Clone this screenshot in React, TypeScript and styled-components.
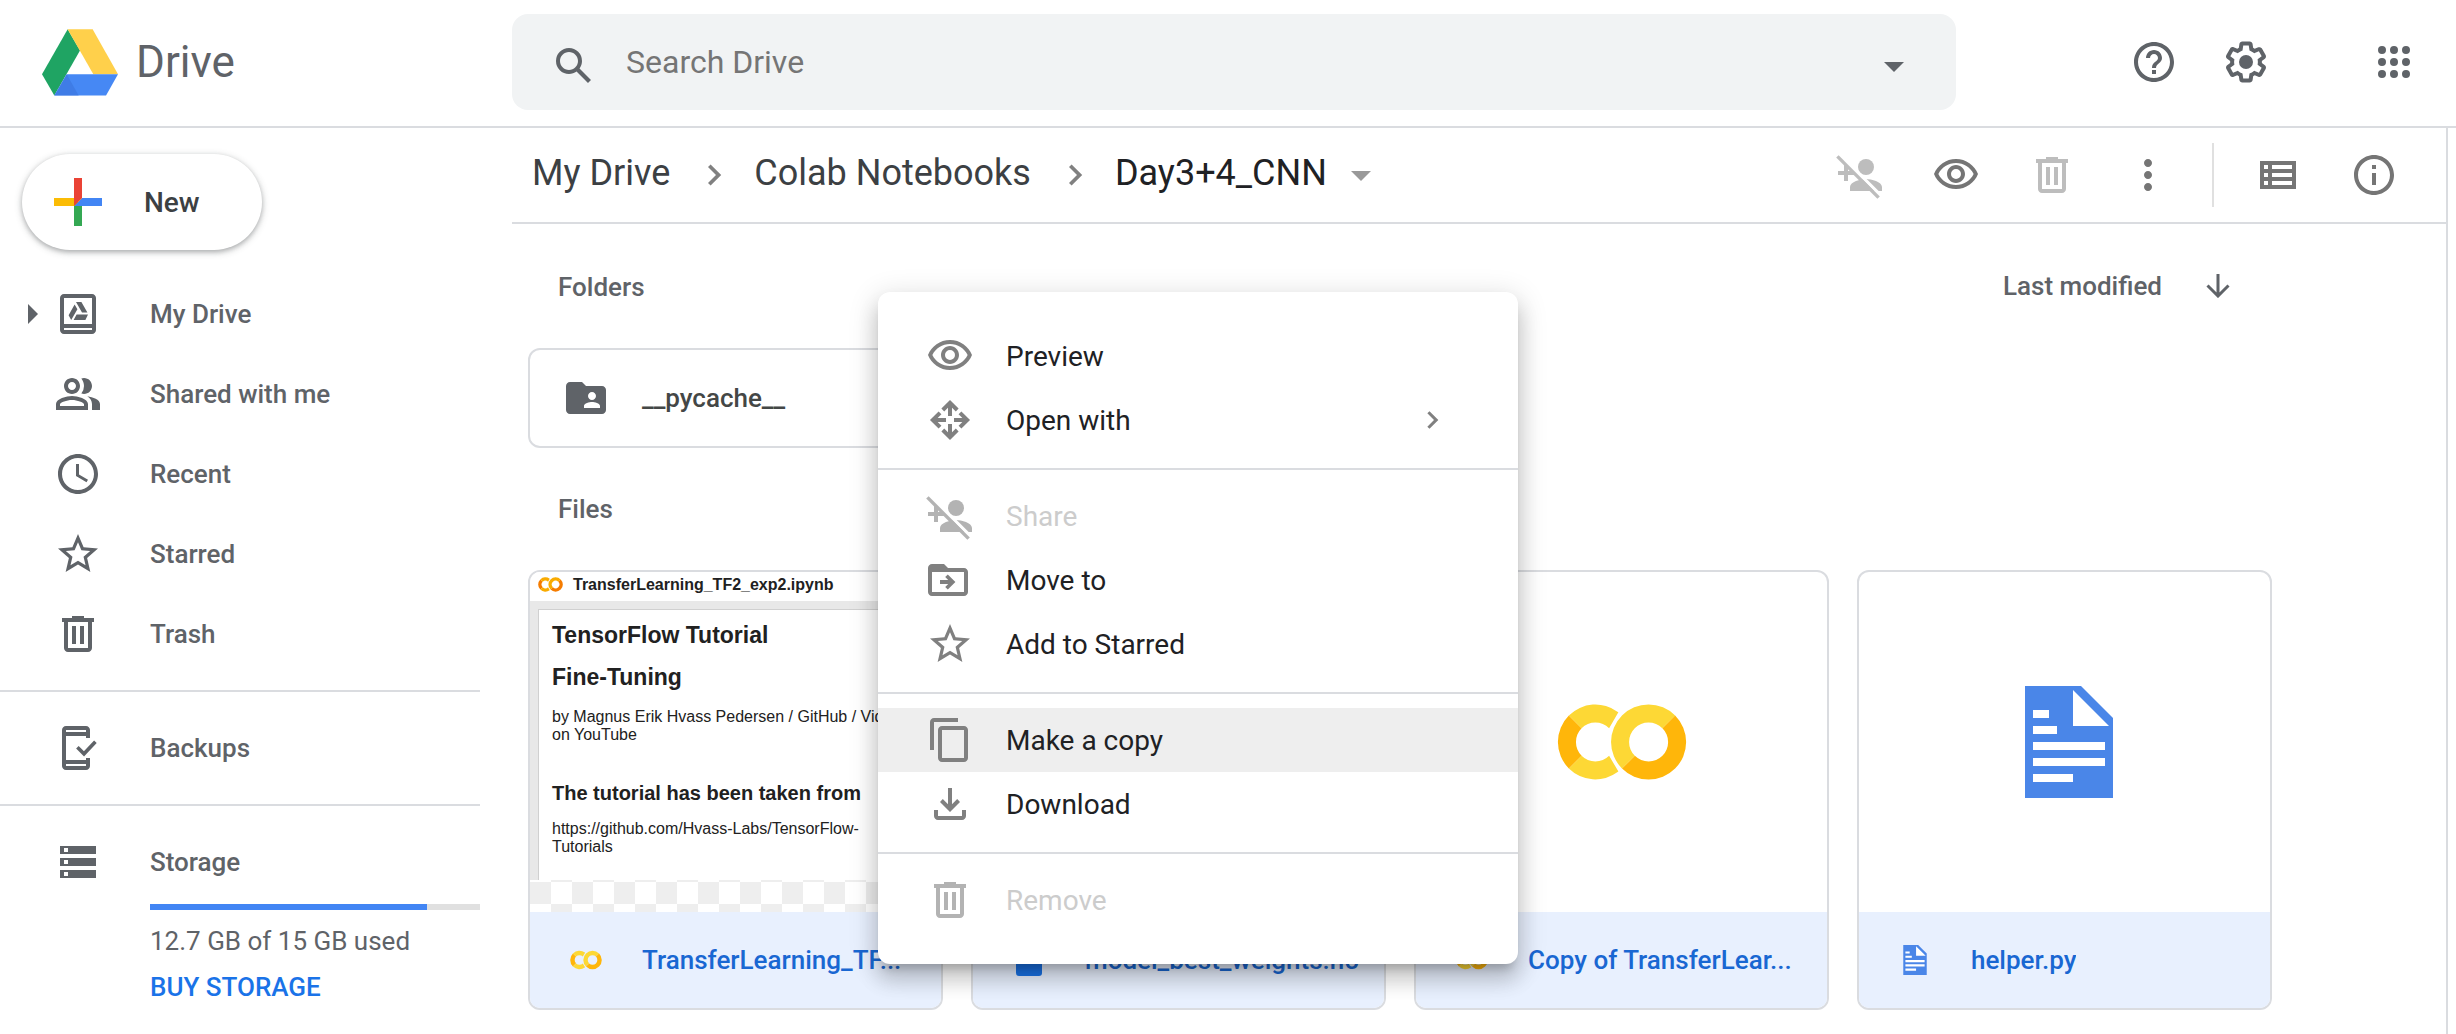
import React from "react";
import styled, { createGlobalStyle } from "styled-components";

const ink = "#5f6368";
const line = "#dadce0";
const sans = `Roboto, "Liberation Sans", sans-serif`;

const GlobalStyle = createGlobalStyle`
  *, *::before, *::after { box-sizing: border-box; }
  html, body { margin: 0; background: #fff; }
  body { font-family: ${sans}; font-size: 26px; color: ${ink}; overflow: hidden; }
  button, input { font: inherit; color: inherit; border: 0; background: none; padding: 0; margin: 0; outline: none; }
  a { color: inherit; text-decoration: none; }
  ul, ol { list-style: none; margin: 0; padding: 0; }
  h1, h2, h3, p { margin: 0; font: inherit; }
`;

/* ---------- icons ---------- */

const Svg = styled.svg<{ $size?: number }>`
  display: block;
  flex: none;
  width: ${(p) => p.$size ?? 48}px;
  height: ${(p) => p.$size ?? 48}px;
  fill: currentColor;
`;

const paths = {
  search:
    "M20.49 19l-5.73-5.73C15.53 12.2 16 10.91 16 9.5A6.5 6.5 0 1 0 9.5 16c1.41 0 2.7-.47 3.77-1.24L19 20.49 20.49 19zM5 9.5C5 7.01 7.01 5 9.5 5S14 7.01 14 9.5 11.99 14 9.5 14 5 11.99 5 9.5z",
  dropdown: "M7 10l5 5 5-5z",
  help: "M11 18h2v-2h-2v2zm1-16C6.48 2 2 6.48 2 12s4.48 10 10 10 10-4.48 10-10S17.52 2 12 2zm0 18c-4.41 0-8-3.59-8-8s3.59-8 8-8 8 3.59 8 8-3.59 8-8 8zm0-14c-2.21 0-4 1.79-4 4h2c0-1.1.9-2 2-2s2 .9 2 2c0 2-3 1.75-3 5h2c0-2.25 3-2.5 3-5 0-2.21-1.79-4-4-4z",
  gear: "M13.85 22.25h-3.7c-.74 0-1.36-.54-1.45-1.27l-.27-1.89c-.27-.14-.53-.29-.79-.46l-1.8.72c-.7.26-1.47-.03-1.81-.65L2.2 15.53c-.35-.66-.2-1.44.36-1.88l1.53-1.19c-.01-.15-.02-.3-.02-.46 0-.15.01-.31.02-.46l-1.52-1.19c-.59-.45-.74-1.26-.37-1.88l1.85-3.19c.34-.62 1.11-.9 1.79-.63l1.81.73c.26-.17.52-.32.78-.46l.27-1.91c.09-.7.71-1.25 1.44-1.25h3.7c.74 0 1.36.54 1.45 1.27l.27 1.89c.27.14.53.29.79.46l1.8-.72c.71-.26 1.48.03 1.82.65l1.84 3.18c.36.66.2 1.44-.36 1.88l-1.52 1.19c.01.15.02.3.02.46s-.01.31-.02.46l1.52 1.19c.56.45.72 1.23.37 1.86l-1.86 3.22c-.34.62-1.11.9-1.8.63l-1.8-.72c-.26.17-.52.32-.78.46l-.27 1.91c-.1.68-.72 1.22-1.46 1.22zm-3.23-2h2.76l.37-2.55.53-.22c.44-.18.88-.44 1.34-.78l.45-.34 2.38.96 1.38-2.4-2.03-1.58.07-.56c.03-.26.06-.51.06-.78s-.03-.53-.06-.78l-.07-.56 2.03-1.58-1.39-2.4-2.39.96-.45-.35c-.42-.32-.87-.58-1.33-.77l-.52-.22-.37-2.55h-2.76l-.37 2.55-.53.21c-.44.19-.88.44-1.34.79l-.45.33-2.38-.95-1.39 2.39 2.03 1.58-.07.56a7 7 0 0 0-.06.79c0 .26.02.53.06.78l.07.56-2.03 1.58 1.38 2.4 2.39-.96.45.35c.43.33.86.58 1.33.77l.53.22.38 2.55zM12 8.5a3.5 3.5 0 1 1 0 7 3.5 3.5 0 0 1 0-7z",
  apps: "M6 4a2 2 0 1 1 0 4 2 2 0 0 1 0-4zM12 4a2 2 0 1 1 0 4 2 2 0 0 1 0-4zM18 4a2 2 0 1 1 0 4 2 2 0 0 1 0-4zM6 10a2 2 0 1 1 0 4 2 2 0 0 1 0-4zM12 10a2 2 0 1 1 0 4 2 2 0 0 1 0-4zM18 10a2 2 0 1 1 0 4 2 2 0 0 1 0-4zM6 16a2 2 0 1 1 0 4 2 2 0 0 1 0-4zM12 16a2 2 0 1 1 0 4 2 2 0 0 1 0-4zM18 16a2 2 0 1 1 0 4 2 2 0 0 1 0-4z",
  drive:
    "M19 2H5c-1.1 0-2 .9-2 2v16c0 1.1.9 2 2 2h14c1.1 0 2-.9 2-2V4c0-1.1-.9-2-2-2zM5 4h14v13H5V4zm0 15h14v1H5v-1zM10.3 7.3l1.4 2.3L8.6 15l-1.3-2.4zM11 6h2.7l3 5.2H14zM11.3 12.2H17L15.7 15H9.8z",
  shared:
    "M15 8c0-1.42-.5-2.73-1.33-3.76.42-.14.86-.24 1.33-.24 2.21 0 4 1.79 4 4s-1.79 4-4 4c-.43 0-.84-.09-1.23-.21-.03-.01-.06-.02-.1-.03A5.98 5.98 0 0 0 15 8zm1.66 5.13C18.03 14.06 19 15.32 19 17v3h4v-3c0-2.18-3.58-3.47-6.34-3.87zM9 6c-1.1 0-2 .9-2 2s.9 2 2 2 2-.9 2-2-.9-2-2-2zm0-2c2.21 0 4 1.79 4 4s-1.79 4-4 4-4-1.79-4-4 1.79-4 4-4zm0 9c-2.67 0-8 1.34-8 4v3h16v-3c0-2.66-5.33-4-8-4zm6 5H3v-.99C3.2 16.29 6.3 15 9 15s5.8 1.29 6 2v1z",
  recent:
    "M12 2C6.5 2 2 6.5 2 12s4.5 10 10 10 10-4.5 10-10S17.5 2 12 2zm0 18c-4.41 0-8-3.59-8-8s3.59-8 8-8 8 3.59 8 8-3.59 8-8 8zm.5-13H11v6l5.25 3.15.75-1.23-4.5-2.67V7z",
  star: "M22 9.24l-7.19-.62L12 2 9.19 8.63 2 9.24l5.46 4.73L5.82 21 12 17.27 18.18 21l-1.63-7.03L22 9.24zM12 15.4l-3.76 2.27 1-4.28-3.32-2.88 4.38-.38L12 6.1l1.71 4.04 4.38.38-3.32 2.88 1 4.28L12 15.4z",
  trash:
    "M15 4V3H9v1H4v2h1v13c0 1.1.9 2 2 2h10c1.1 0 2-.9 2-2V6h1V4h-5zm2 15H7V6h10v13zM9 8h2v9H9V8zm4 0h2v9h-2V8z",
  storage:
    "M3 20h18v-4H3v4zm2-3h2v2H5v-2zM3 4v4h18V4H3zm4 3H5V5h2v2zm-4 7h18v-4H3v4zm2-3h2v2H5v-2z",
  eye: "M12 6c3.79 0 7.17 2.13 8.82 5.5C19.17 14.87 15.79 17 12 17s-7.17-2.13-8.82-5.5C4.83 8.13 8.21 6 12 6m0-2C7 4 2.73 7.11 1 11.5 2.73 15.89 7 19 12 19s9.27-3.11 11-7.5C21.27 7.11 17 4 12 4zm0 5a2.5 2.5 0 0 1 0 5 2.5 2.5 0 0 1 0-5m0-2c-2.48 0-4.5 2.02-4.5 4.5S9.52 16 12 16s4.5-2.02 4.5-4.5S14.48 7 12 7z",
  more: "M12 8c1.1 0 2-.9 2-2s-.9-2-2-2-2 .9-2 2 .9 2 2 2zm0 2c-1.1 0-2 .9-2 2s.9 2 2 2 2-.9 2-2-.9-2-2-2zm0 6c-1.1 0-2 .9-2 2s.9 2 2 2 2-.9 2-2-.9-2-2-2z",
  list: "M3 5v14h18V5H3zM5 7h2v2H5V7zm4 0h10v2H9V7zm-4 4h2v2H5v-2zm4 0h10v2H9v-2zm-4 4h2v2H5v-2zm4 0h10v2H9v-2z",
  info: "M11 7h2v2h-2V7zm0 4h2v6h-2v-6zm1-9C6.48 2 2 6.48 2 12s4.48 10 10 10 10-4.48 10-10S17.52 2 12 2zm0 18c-4.41 0-8-3.59-8-8s3.59-8 8-8 8 3.59 8 8-3.59 8-8 8z",
  folderShared:
    "M20 6h-8l-2-2H4c-1.1 0-1.99.9-1.99 2L2 18c0 1.1.9 2 2 2h16c1.1 0 2-.9 2-2V8c0-1.1-.9-2-2-2zm-5 3c1.1 0 2 .9 2 2s-.9 2-2 2-2-.9-2-2 .9-2 2-2zm4 8h-8v-1c0-1.33 2.67-2 4-2s4 .67 4 2v1z",
  move: "M19 6h-8l-2-2H3c-1.1 0-2 .9-2 2v12c0 1.1.9 2 2 2h16c1.1 0 2-.9 2-2V8c0-1.1-.9-2-2-2zM19 18H3V8h16v10zM10.9 9.2 9.6 10.5 11.1 12H7v2h4.1l-1.5 1.5 1.3 1.3L14.7 13z",
  copy: "M16 1H4c-1.1 0-2 .9-2 2v14h2V3h12V1zm3 4H8c-1.1 0-2 .9-2 2v14c0 1.1.9 2 2 2h11c1.1 0 2-.9 2-2V7c0-1.1-.9-2-2-2zm0 16H8V7h11v14z",
  download:
    "M12 16l-5-5 1.4-1.45 2.6 2.6V4h2v8.15l2.6-2.6L17 11l-5 5zM6 20c-1.1 0-2-.9-2-2v-3h2v3h12v-3h2v3c0 1.1-.9 2-2 2H6z",
  chevron: "M9.3 6.7 8 8l4 4-4 4 1.3 1.3L14.6 12z",
};

type IconName = keyof typeof paths | "shareOff" | "backups" | "openWith";

function Icon({ name, size }: { name: IconName; size?: number }) {
  if (name === "shareOff")
    return (
      <Svg $size={size} viewBox="0 0 24 24" aria-hidden="true">
        <circle cx="15" cy="8" r="4" />
        <path d="M15 14c-2.67 0-8 1.34-8 4v2h16v-2c0-2.66-5.33-4-8-4zM6 10V7H4v3H1v2h3v3h2v-3h3v-2z" />
        <path d="M8.5 8.3 22 21.8" stroke="#fff" strokeWidth="1.6" />
        <path d="M.7 2.7 21.3 23.3" stroke="currentColor" strokeWidth="1.7" />
      </Svg>
    );
  if (name === "backups")
    return (
      <Svg $size={size} viewBox="0 0 24 24" aria-hidden="true">
        <path d="M6 1h10c1.1 0 2 .9 2 2v4h-2V6H6v12h10v-1h2v4c0 1.1-.9 2-2 2H6c-1.1 0-2-.9-2-2V3c0-1.1.9-2 2-2zm0 2v1h10V3H6zm0 17v1h10v-1H6z" fillRule="evenodd" />
        <path d="M11.7 11.6 15 14.9l5.7-6" fill="none" stroke="currentColor" strokeWidth="1.8" />
      </Svg>
    );
  if (name === "openWith")
    return (
      <Svg $size={size} viewBox="0 0 24 24" aria-hidden="true">
        {[0, 90, 180, 270].map((a) => (
          <path
            key={a}
            d="M12 10V4M8.4 7 12 3.4 15.6 7"
            fill="none"
            stroke="currentColor"
            strokeWidth="2"
            transform={`rotate(${a} 12 12)`}
          />
        ))}
      </Svg>
    );
  return (
    <Svg $size={size} viewBox="0 0 24 24" aria-hidden="true">
      <path d={paths[name]} fillRule="evenodd" />
    </Svg>
  );
}

function Colab({ size, light = "#fdd835", dark = "#ffb60a" }: { size: number; light?: string; dark?: string }) {
  return (
    <Svg $size={size} viewBox="0 0 24 24" aria-hidden="true">
      <path fill={dark} d="M4.54 9.46 2.19 7.1a6.93 6.93 0 0 0 0 9.79l2.36-2.36a3.59 3.59 0 0 1-.01-5.07z" />
      <path fill={light} d="M2.19 7.1l2.35 2.36a3.59 3.59 0 0 1 5.08 0l1.71-2.93-.1-.08A6.93 6.93 0 0 0 2.19 7.1zM11.34 17.46l-1.72-2.92a3.59 3.59 0 0 1-5.08 0L2.19 16.9a6.93 6.93 0 0 0 9 .65l.11-.09zM12 7.1a6.93 6.93 0 0 0 0 9.79l2.36-2.36a3.59 3.59 0 1 1 5.08-5.08L21.81 7.1A6.93 6.93 0 0 0 12 7.1z" />
      <path fill={dark} d="M21.81 7.1l-2.35 2.36a3.59 3.59 0 0 1-5.08 5.08L12 16.9a6.93 6.93 0 0 0 9.81-9.8z" />
    </Svg>
  );
}

function DocIcon({ size, viewBox = "-12 0 112 112" }: { size: number; viewBox?: string }) {
  return (
    <Svg $size={size} viewBox={viewBox} aria-hidden="true">
      <path fill="#4a86e8" d="M4 0h56l32 32v80H4z" />
      <path fill="#fff" d="M52 4v36h36zM12 24h16v8H12zM12 40h24v8H12zM12 56h72v8H12zM12 72h72v8H12zM12 88h40v8H12z" />
    </Svg>
  );
}

function BlankFileIcon() {
  return (
    <Svg $size={32} viewBox="0 0 32 32" aria-hidden="true">
      <path fill="#1a73e8" d="M6 0h14l9 9v20a3 3 0 0 1-3 3H6a3 3 0 0 1-3-3V3a3 3 0 0 1 3-3z" />
    </Svg>
  );
}

const LogoSvg = styled.svg`
  display: block;
  width: 76px;
  height: 67px;
`;

function DriveLogo() {
  return (
    <LogoSvg viewBox="36 56 228 200" aria-hidden="true">
      <path fill="#1fa463" d="M113 56l37 64-77 135-37-64z" />
      <path fill="#ffd04b" d="M113 56h75l76 135h-74z" />
      <path fill="#4688f4" d="M110 191h154l-36 64H73z" />
      <path fill="#3c78e0" d="M110 191l36 64H73z" opacity=".7" />
    </LogoSvg>
  );
}

/* ---------- header ---------- */

const Header = styled.header`
  display: flex;
  align-items: center;
  height: 128px;
  padding-right: 22px;
  padding-bottom: 2px;
  border-bottom: 2px solid ${line};
`;

const Brand = styled.a`
  display: flex;
  align-items: center;
  flex: none;
  gap: 18px;
  width: 512px;
  padding-left: 42px;
  font-size: 44px;
  line-height: 52px;
`;

const SearchBar = styled.form`
  display: flex;
  flex: 1;
  max-width: 1444px;
  height: 96px;
  border-radius: 16px;
  background: #f1f3f4;
`;

const SearchButton = styled.button`
  display: flex;
  align-items: center;
  width: 114px;
  padding: 8px 28px 0 38px;
`;

const SearchInput = styled.input`
  flex: 1;
  min-width: 0;
  height: 96px;
  padding-right: 8px;
  font-size: 32px;
  &::placeholder { color: #757575; opacity: 1; }
`;

const SearchOptions = styled(SearchButton)`
  width: 124px;
`;

const HeaderActions = styled.div`
  display: flex;
  gap: 12px;
  margin-left: auto;
`;

const RoundButton = styled.button<{ $apart?: boolean }>`
  display: flex;
  align-items: center;
  justify-content: center;
  width: 80px;
  height: 80px;
  margin-left: ${(p) => (p.$apart ? 56 : 0)}px;
`;

/* ---------- sidebar ---------- */

const Body = styled.div`
  display: flex;
  align-items: stretch;
  min-height: calc(100vh - 128px);
`;

const Sidebar = styled.nav`
  flex: none;
  width: 480px;
  margin-right: 32px;
  padding-top: 26px;
`;

const NewButton = styled.button`
  display: flex;
  align-items: center;
  gap: 30px;
  width: 240px;
  height: 96px;
  margin: 0 0 24px 22px;
  padding-left: 20px;
  border-radius: 48px;
  background: #fff;
  color: #3c4043;
  font-size: 28px;
  font-weight: 500;
  box-shadow: 0 2px 4px rgba(60, 64, 67, 0.3), 0 2px 6px 2px rgba(60, 64, 67, 0.15);
`;

const NavGroup = styled.ul`
  padding-bottom: 16px;
  margin-bottom: 16px;
  border-bottom: 2px solid ${line};
`;

const NavLink = styled.a`
  display: flex;
  align-items: center;
  height: 80px;
  padding-left: 26px;
  font-weight: 500;
`;

const Expander = styled.span`
  width: 28px;
  padding-left: 2px;
`;

const NavText = styled.span`
  margin-left: 48px;
`;

const StorageDetails = styled.div`
  margin: 2px 0 0 150px;
`;

const Meter = styled.div`
  height: 6px;
  background: #e0e0e0;
`;

const MeterFill = styled.div`
  height: 6px;
  background: #4285f4;
`;

const Usage = styled.p`
  margin-top: 8px;
  line-height: 46px;
`;

const BuyLink = styled.a`
  display: block;
  color: #1a73e8;
  font-weight: 500;
  line-height: 46px;
`;

/* ---------- main ---------- */

const Main = styled.main`
  flex: 1;
  min-width: 0;
`;

const Rail = styled.aside`
  flex: none;
  width: 10px;
  border-left: 2px solid ${line};
`;

const Toolbar = styled.div`
  display: flex;
  align-items: center;
  justify-content: space-between;
  height: 96px;
  padding: 0 24px 0 20px;
  border-bottom: 2px solid ${line};
`;

const Crumbs = styled.ol`
  display: flex;
  align-items: center;
  color: #808080;
`;

const Crumb = styled.li`
  display: flex;
  align-items: center;
`;

const CrumbLink = styled.a<{ $current?: boolean }>`
  padding-bottom: 4px;
  font-size: 36px;
  line-height: 44px;
  color: ${(p) => (p.$current ? "#202124" : "#3c4043")};
`;

const CrumbGap = styled.span`
  display: flex;
  padding: 0 14px 0 22px;
`;

const CrumbMenu = styled.button`
  margin-left: 10px;
  color: #999;
`;

const Tools = styled.div`
  display: flex;
  align-items: center;
`;

const ToolButton = styled.button`
  display: flex;
  justify-content: center;
  align-items: center;
  width: 96px;
  height: 96px;
  color: #757575;
  &:disabled { color: #bdbdbd; }
`;

const ToolDivider = styled.span`
  width: 2px;
  height: 64px;
  margin: 0 16px;
  background: #e0e0e0;
`;

const Content = styled.div`
  padding: 2px 174px 24px 16px;
`;

const SectionHead = styled.div`
  display: flex;
  align-items: center;
  justify-content: space-between;
  height: 122px;
  padding: 0 42px 0 30px;
`;

const SectionTitle = styled.h2`
  font-weight: 500;
`;

const SortButton = styled.button`
  display: flex;
  align-items: center;
  gap: 44px;
  padding-bottom: 2px;
  font-weight: 500;
`;

const CardGrid = styled.div`
  display: grid;
  grid-template-columns: repeat(4, minmax(0, 1fr));
  column-gap: 28px;
`;

const FolderCard = styled.a`
  display: flex;
  align-items: center;
  gap: 32px;
  height: 100px;
  padding: 0 20px 0 32px;
  border: 2px solid ${line};
  border-radius: 12px;
  font-weight: 500;
  color: #444746;
  svg { color: ${ink}; }
`;

const FileCard = styled.a`
  display: block;
  overflow: hidden;
  border: 2px solid ${line};
  border-radius: 12px;
`;

const Thumb = styled.div`
  display: flex;
  align-items: center;
  justify-content: center;
  height: 340px;
`;

const FileFooter = styled.div`
  display: flex;
  align-items: center;
  gap: 40px;
  height: 96px;
  padding: 0 16px 0 40px;
  background: #e8f0fe;
`;

const FileName = styled.span`
  min-width: 0;
  overflow: hidden;
  white-space: nowrap;
  text-overflow: ellipsis;
  color: #1967d2;
  font-weight: 500;
  line-height: 36px;
`;

const Notebook = styled.div`
  height: 340px;
  overflow: hidden;
  padding-bottom: 32px;
  background: repeating-conic-gradient(#eee 0 25%, #fff 0 50%) 0 -20px / 42px 44px;
  font-family: "Liberation Sans", Arial, sans-serif;
  font-size: 16px;
  color: #212121;
`;

const NotebookBar = styled.div`
  display: flex;
  align-items: center;
  gap: 10px;
  height: 29px;
  padding: 0 8px 4px;
  background: #fff;
  font-weight: 700;
`;

const NotebookPage = styled.div`
  height: 279px;
  padding: 8px 0 0 8px;
  background: #e8e8e8;
`;

const NotebookCell = styled.div`
  height: 271px;
  padding: 4px 4px 0 13px;
  border: solid #d0d0d0;
  border-width: 1px 0 0 1px;
  background: #fff;
`;

const CellTitle = styled.h3`
  font-size: 23px;
  font-weight: 700;
  line-height: 42px;
`;

const CellSubtitle = styled.h3`
  margin-top: 32px;
  font-size: 20px;
  font-weight: 700;
  line-height: 34px;
`;

const CellText = styled.p`
  margin-top: 10px;
  line-height: 18px;
  white-space: nowrap;
`;

/* ---------- context menu ---------- */

const Menu = styled.div`
  position: absolute;
  top: 292px;
  left: 878px;
  width: 640px;
  padding: 32px 0;
  border-radius: 12px;
  background: #fff;
  box-shadow: 0 16px 20px 2px rgba(0, 0, 0, 0.14), 0 6px 28px 4px rgba(0, 0, 0, 0.12),
    0 10px 10px -6px rgba(0, 0, 0, 0.2);
`;

const MenuItem = styled.button<{ $active?: boolean }>`
  display: flex;
  align-items: center;
  width: 100%;
  height: 64px;
  padding: 0 64px 0 48px;
  background: ${(p) => (p.$active ? "#eee" : "transparent")};
  color: #808080;
  &:disabled { color: #b3b3b3; }
`;

const MenuText = styled.span<{ $disabled?: boolean }>`
  flex: 1;
  margin-left: 32px;
  text-align: left;
  font-size: 28px;
  color: ${(p) => (p.$disabled ? "#ccc" : "#202124")};
`;

const MenuRule = styled.hr`
  height: 2px;
  margin: 16px 0 14px;
  border: 0;
  background: ${line};
`;

/* ---------- data ---------- */

const navItems: { icon: IconName; label: string; expandable?: boolean }[] = [
  { icon: "drive", label: "My Drive", expandable: true },
  { icon: "shared", label: "Shared with me" },
  { icon: "recent", label: "Recent" },
  { icon: "star", label: "Starred" },
  { icon: "trash", label: "Trash" },
];

const menuGroups: { icon: IconName; label: string; disabled?: boolean; active?: boolean; submenu?: boolean }[][] = [
  [
    { icon: "eye", label: "Preview" },
    { icon: "openWith", label: "Open with", submenu: true },
  ],
  [
    { icon: "shareOff", label: "Share", disabled: true },
    { icon: "move", label: "Move to" },
    { icon: "star", label: "Add to Starred" },
  ],
  [
    { icon: "copy", label: "Make a copy", active: true },
    { icon: "download", label: "Download" },
  ],
  [{ icon: "trash", label: "Remove", disabled: true }],
];

const usedGb = 12.6;
const totalGb = 15;

function NavItem({ icon, label, expandable }: { icon: IconName; label: string; expandable?: boolean }) {
  return (
    <li>
      <NavLink href="#">
        <Expander>
          {expandable && (
            <svg width="10" height="20" viewBox="0 0 10 20" fill="currentColor" display="block" aria-hidden="true">
              <path d="M0 0l10 10L0 20z" />
            </svg>
          )}
        </Expander>
        <Icon name={icon} />
        <NavText>{label}</NavText>
      </NavLink>
    </li>
  );
}

function File({ name, icon, children }: { name: string; icon: React.ReactNode; children?: React.ReactNode }) {
  return (
    <FileCard href="#">
      {children}
      <FileFooter>
        {icon}
        <FileName>{name}</FileName>
      </FileFooter>
    </FileCard>
  );
}

export default function App() {
  return (
    <>
      <GlobalStyle />
      <Header>
        <Brand href="#">
          <DriveLogo />
          Drive
        </Brand>
        <SearchBar role="search" onSubmit={(e) => e.preventDefault()}>
          <SearchButton type="submit" aria-label="Search">
            <Icon name="search" />
          </SearchButton>
          <SearchInput type="text" placeholder="Search Drive" aria-label="Search Drive" />
          <SearchOptions type="button" aria-label="Search options">
            <Icon name="dropdown" />
          </SearchOptions>
        </SearchBar>
        <HeaderActions>
          <RoundButton aria-label="Support"><Icon name="help" /></RoundButton>
          <RoundButton aria-label="Settings"><Icon name="gear" /></RoundButton>
          <RoundButton $apart aria-label="Google apps"><Icon name="apps" /></RoundButton>
        </HeaderActions>
      </Header>

      <Body>
        <Sidebar>
          <NewButton>
            <Svg $size={72} viewBox="0 0 36 36" aria-hidden="true">
              <path fill="#34a853" d="M16 16v14h4V20z" />
              <path fill="#4285f4" d="M30 16H20l-4 4h14z" />
              <path fill="#fbbc05" d="M6 16v4h10l4-4z" />
              <path fill="#ea4335" d="M20 16V6h-4v14z" />
            </Svg>
            New
          </NewButton>
          <NavGroup>
            {navItems.map((item) => (
              <NavItem key={item.label} {...item} />
            ))}
          </NavGroup>
          <NavGroup>
            <NavItem icon="backups" label="Backups" />
          </NavGroup>
          <ul>
            <NavItem icon="storage" label="Storage" />
          </ul>
          <StorageDetails>
            <Meter role="progressbar" aria-label="Storage used" aria-valuenow={usedGb} aria-valuemax={totalGb}>
              <MeterFill style={{ width: `${(usedGb / totalGb) * 100}%` }} />
            </Meter>
            <Usage>12.7 GB of 15 GB used</Usage>
            <BuyLink href="#">BUY STORAGE</BuyLink>
          </StorageDetails>
        </Sidebar>

        <Main>
          <Toolbar>
            <Crumbs>
              <Crumb>
                <CrumbLink href="#">My Drive</CrumbLink>
                <CrumbGap><Icon name="chevron" /></CrumbGap>
              </Crumb>
              <Crumb>
                <CrumbLink href="#">Colab Notebooks</CrumbLink>
                <CrumbGap><Icon name="chevron" /></CrumbGap>
              </Crumb>
              <Crumb>
                <CrumbLink href="#" $current>Day3+4_CNN</CrumbLink>
                <CrumbMenu aria-label="Folder actions"><Icon name="dropdown" /></CrumbMenu>
              </Crumb>
            </Crumbs>
            <Tools>
              <ToolButton disabled aria-label="Share"><Icon name="shareOff" /></ToolButton>
              <ToolButton aria-label="Preview"><Icon name="eye" /></ToolButton>
              <ToolButton disabled aria-label="Remove"><Icon name="trash" /></ToolButton>
              <ToolButton aria-label="More actions"><Icon name="more" /></ToolButton>
              <ToolDivider />
              <ToolButton aria-label="List view"><Icon name="list" /></ToolButton>
              <ToolButton aria-label="View details"><Icon name="info" /></ToolButton>
            </Tools>
          </Toolbar>

          <Content>
            <SectionHead>
              <SectionTitle>Folders</SectionTitle>
              <SortButton>
                Last modified
                <svg width="24" height="24" viewBox="0 0 24 24" fill="none" stroke="currentColor" strokeWidth="3" aria-hidden="true">
                  <path d="M12 0v22M1.5 11.5 12 22l10.5-10.5" />
                </svg>
              </SortButton>
            </SectionHead>
            <CardGrid>
              <FolderCard href="#">
                <Icon name="folderShared" />
                __pycache__
              </FolderCard>
            </CardGrid>

            <SectionHead>
              <SectionTitle>Files</SectionTitle>
            </SectionHead>
            <CardGrid>
              <File name="TransferLearning_TF..." icon={<Colab size={32} />}>
                <Notebook>
                  <NotebookBar>
                    <Colab size={25} light="#f9ab00" dark="#f57c00" />
                    TransferLearning_TF2_exp2.ipynb
                  </NotebookBar>
                  <NotebookPage>
                    <NotebookCell>
                      <CellTitle>TensorFlow Tutorial</CellTitle>
                      <CellTitle>Fine-Tuning</CellTitle>
                      <CellText>
                        by Magnus Erik Hvass Pedersen / GitHub / Videos
                        <br />
                        on YouTube
                      </CellText>
                      <CellSubtitle>The tutorial has been taken from</CellSubtitle>
                      <CellText>
                        https://github.com/Hvass-Labs/TensorFlow-
                        <br />
                        Tutorials
                      </CellText>
                    </NotebookCell>
                  </NotebookPage>
                </Notebook>
              </File>
              <File name="model_best_weights.h5" icon={<BlankFileIcon />}>
                <Thumb />
              </File>
              <File name="Copy of TransferLear..." icon={<Colab size={32} />}>
                <Thumb><Colab size={130} /></Thumb>
              </File>
              <File name="helper.py" icon={<DocIcon size={32} viewBox="-12 -4 120 120" />}>
                <Thumb><DocIcon size={112} /></Thumb>
              </File>
            </CardGrid>
          </Content>
        </Main>
        <Rail />
      </Body>

      <Menu role="menu">
        {menuGroups.map((group, i) => (
          <React.Fragment key={i}>
            {i > 0 && <MenuRule />}
            {group.map((item) => (
              <MenuItem key={item.label} role="menuitem" disabled={item.disabled} $active={item.active}>
                <Icon name={item.icon} />
                <MenuText $disabled={item.disabled}>{item.label}</MenuText>
                {item.submenu && <Icon name="chevron" size={40} />}
              </MenuItem>
            ))}
          </React.Fragment>
        ))}
      </Menu>
    </>
  );
}
